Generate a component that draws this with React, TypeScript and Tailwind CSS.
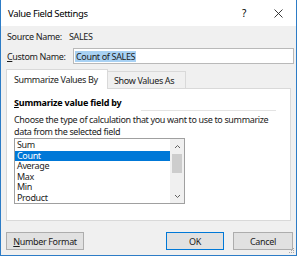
const items = ["Sum", "Count", "Average", "Max", "Min", "Product"];

function Chevron({ up }: { up?: boolean }) {
  return (
    <svg width="7" height="5" viewBox="0 0 7 5" className="block">
      <path
        d={up ? "M1 4 L3.5 1.5 L6 4" : "M1 1 L3.5 3.5 L6 1"}
        fill="none"
        stroke="#606060"
        strokeWidth="1"
      />
    </svg>
  );
}

export default function App() {
  return (
    <div
      className="w-[300px] h-[257px] bg-white text-[9px] leading-[11px] tracking-[-0.35px] text-[#1b1b1b]"
      style={{ fontFamily: '"Noto Sans", "Segoe UI", sans-serif' }}
    >
      <div className="relative w-[297px] h-[256px] flex flex-col border-l border-r border-b border-[#2d7cc6]">
        {/* title bar */}
        <div className="h-[26px] bg-white flex items-center pl-[7px] pr-[13px] shrink-0">
          <span className="text-[9.5px] text-black">Value Field Settings</span>
          <span className="ml-auto text-[10px] text-black">?</span>
          <svg width="9" height="9" viewBox="0 0 9 9" className="ml-[28px]">
            <path d="M0.5 0.5 L8.5 8.5 M8.5 0.5 L0.5 8.5" stroke="#222" strokeWidth="0.9" />
          </svg>
        </div>

        {/* body */}
        <div className="flex-1 bg-[#f0f0f0] flex flex-col pl-[5px] pr-[2px] pt-[4px]">
          <div className="flex items-center h-[12px] pl-[1px]">
            <span className="inline-block w-[62px] shrink-0">Source Name:</span>
            <span>SALES</span>
          </div>

          <div className="flex items-center mt-[6px] pl-[1px]">
            <span className="inline-block w-[66px] shrink-0">
              <span className="underline">C</span>ustom Name:
            </span>
            <div className="flex-1 h-[16px] bg-white border border-[#b9b9b9] flex items-center pl-[1px]">
              <span className="bg-[#a8d1f3] px-[1px] h-[11px] flex items-center">Count of SALES</span>
            </div>
          </div>

          {/* tabs */}
          <div className="flex items-end mt-[4px] h-[20px] mr-[3px]">
            <div className="h-[20px] w-[102px] bg-white border-l border-t border-r border-[#d9d9d9] flex items-center pl-[7px] relative z-10 -mb-px">
              Summarize Values By
            </div>
            <div className="h-[17px] w-[78px] bg-[#f0f0f0] border-t border-r border-[#d9d9d9] flex items-center pl-[6px]">
              Show Values As
            </div>
          </div>

          <div className="h-[133px] bg-white border border-[#d9d9d9] mr-[3px] pl-[7px] pt-[8px] flex flex-col">
            <div className="font-bold text-black tracking-[-0.2px]">
              <span className="underline">S</span>ummarize value field by
            </div>
            <div className="h-px bg-[#e3e3e3] mt-[2px] ml-[127px] mr-[14px]" />
            <div className="mt-[3px] leading-[12px] whitespace-nowrap">
              Choose the type of calculation that you want to use to summarize
              <br />
              data from the selected field
            </div>
            <div className="w-[171px] h-[66px] border border-[#a0a0a0] flex">
              <div className="flex-1 flex flex-col pt-px">
                {items.map((it) => (
                  <div
                    key={it}
                    className={
                      "h-[10.5px] leading-[10px] flex items-center pl-[2px] " +
                      (it === "Count" ? "bg-[#0078d7] text-white" : "")
                    }
                  >
                    {it}
                  </div>
                ))}
              </div>
              <div className="w-[14px] bg-[#f0f0f0] flex flex-col items-center">
                <div className="h-[14px] flex items-center justify-center">
                  <Chevron up />
                </div>
                <div className="w-[10px] h-[19px] bg-[#cdcdcd] mt-px" />
                <div className="mt-auto h-[14px] flex items-center justify-center">
                  <Chevron />
                </div>
              </div>
            </div>
          </div>

          {/* buttons */}
          <div className="flex items-center mt-[11px] mr-[1px]">
            <button className="w-[78px] h-[18px] bg-[#e1e1e1] border border-[#adadad] flex items-center justify-center">
              <span>
                <span className="underline">N</span>umber Format
              </span>
            </button>
            <button className="ml-auto w-[58px] h-[18px] bg-[#e1e1e1] border border-[#0078d7] flex items-center justify-center">
              OK
            </button>
            <button className="ml-[9px] w-[60px] h-[18px] bg-[#e1e1e1] border border-[#adadad] flex items-center justify-center">
              Cancel
            </button>
          </div>
        </div>

        {/* size grip */}
        <svg width="7" height="7" viewBox="0 0 7 7" className="absolute right-[1px] bottom-[1px]">
          <rect x="5" y="1" width="1" height="1" fill="#a8a8a8" />
          <rect x="3" y="3" width="1" height="1" fill="#a8a8a8" />
          <rect x="5" y="3" width="1" height="1" fill="#a8a8a8" />
          <rect x="1" y="5" width="1" height="1" fill="#a8a8a8" />
          <rect x="3" y="5" width="1" height="1" fill="#a8a8a8" />
          <rect x="5" y="5" width="1" height="1" fill="#a8a8a8" />
        </svg>
      </div>
    </div>
  );
}
